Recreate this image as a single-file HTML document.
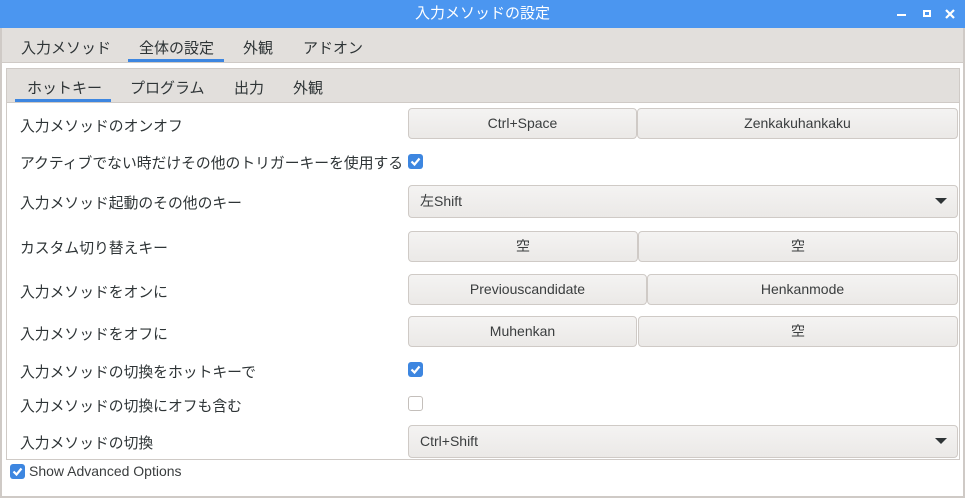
<!DOCTYPE html><html><head><meta charset="utf-8"><style>
*{box-sizing:border-box;margin:0;padding:0}
body{width:965px;height:498px;background:#fff;font-family:"Liberation Sans","Noto Sans CJK JP",sans-serif;font-size:14px;color:#2e3436;position:relative;overflow:hidden}
.abs{position:absolute}
.title{left:0;top:0;width:965px;height:28px;background:#4b96f0;color:#fff;text-align:center;line-height:28px;font-size:15px}
.win{left:0;top:28px;width:965px;height:470px;border-left:2px solid #cfcac6;border-right:2px solid #cfcac6;border-bottom:2px solid #cfcac6}
.tb1{left:2px;top:28px;width:961px;height:35px;background:#e2dfdc;border-bottom:1px solid #cfcac6}
.tab{position:absolute;font-size:15px}
.ul{position:absolute;height:3px;background:#3d86e0}
.frame{left:6px;top:68px;width:954px;height:392px;border:1px solid #cfcac6}
.tb2{left:7px;top:69px;width:952px;height:34px;background:#e2dfdc;border-bottom:1px solid #cfcac6}
.lbl{position:absolute;left:20px;font-size:14.8px}
.btn{position:absolute;height:31px;border:1px solid #cfcac6;border-radius:4px;background:linear-gradient(#f4f3f2,#ebe9e7);text-align:center;line-height:29px;font-size:14px;color:#3a3d3e}
.dd{text-align:left;padding-left:11px}
.arr{position:absolute;right:10px;top:12px;width:0;height:0;border-left:6px solid transparent;border-right:6px solid transparent;border-top:6px solid #2e3436}
.cb{position:absolute;width:15px;height:15px;border-radius:3px;background:#3d86e0}
.cb svg{position:absolute;left:0;top:0}
.cbe{position:absolute;width:15px;height:15px;border-radius:3px;border:1px solid #c4bfbb;background:#fff}
</style></head><body>
<div class="abs title">入力メソッドの設定</div>
<div class="abs" style="left:897px;top:14px;width:9px;height:2px;background:#fff"></div>
<div class="abs" style="left:923px;top:10px;width:8px;height:7px;border:2px solid #fff"></div>
<svg class="abs" style="left:945px;top:9px" width="10" height="10"><path d="M1 1L9 9M9 1L1 9" stroke="#fff" stroke-width="2.2"/></svg>
<div class="abs win"></div>
<div class="abs tb1"></div>
<div class="tab" style="left:21px;top:37px">入力メソッド</div>
<div class="tab" style="left:139px;top:37px">全体の設定</div>
<div class="tab" style="left:243px;top:37px">外観</div>
<div class="tab" style="left:303px;top:37px">アドオン</div>
<div class="ul" style="left:128px;top:59px;width:96px"></div>
<div class="abs frame"></div>
<div class="abs tb2"></div>
<div class="tab" style="left:27px;top:77px">ホットキー</div>
<div class="tab" style="left:130px;top:77px">プログラム</div>
<div class="tab" style="left:234px;top:77px">出力</div>
<div class="tab" style="left:293px;top:77px">外観</div>
<div class="ul" style="left:15px;top:99px;width:96px"></div>

<div class="lbl" style="top:115px">入力メソッドのオンオフ</div>
<div class="btn" style="left:408px;top:108px;width:229px">Ctrl+Space</div>
<div class="btn" style="left:637px;top:108px;width:321px">Zenkakuhankaku</div>

<div class="lbl" style="top:152px">アクティブでない時だけその他のトリガーキーを使用する</div>
<div class="cb" style="left:408px;top:154px"><svg width="15" height="15"><path d="M3.5 7.5L6.5 10.5L11.5 4.5" stroke="#fff" stroke-width="2.2" fill="none"/></svg></div>

<div class="lbl" style="top:192px">入力メソッド起動のその他のキー</div>
<div class="btn dd" style="left:408px;top:185px;width:550px;height:33px;line-height:31px">左Shift<span class="arr"></span></div>

<div class="lbl" style="top:237px">カスタム切り替えキー</div>
<div class="btn" style="left:408px;top:231px;width:230px">空</div>
<div class="btn" style="left:638px;top:231px;width:320px">空</div>

<div class="lbl" style="top:281px">入力メソッドをオンに</div>
<div class="btn" style="left:408px;top:274px;width:239px">Previouscandidate</div>
<div class="btn" style="left:647px;top:274px;width:311px">Henkanmode</div>

<div class="lbl" style="top:323px">入力メソッドをオフに</div>
<div class="btn" style="left:408px;top:316px;width:229px">Muhenkan</div>
<div class="btn" style="left:638px;top:316px;width:320px">空</div>

<div class="lbl" style="top:361px">入力メソッドの切換をホットキーで</div>
<div class="cb" style="left:408px;top:362px"><svg width="15" height="15"><path d="M3.5 7.5L6.5 10.5L11.5 4.5" stroke="#fff" stroke-width="2.2" fill="none"/></svg></div>

<div class="lbl" style="top:395px">入力メソッドの切換にオフも含む</div>
<div class="cbe" style="left:408px;top:396px"></div>

<div class="lbl" style="top:432px">入力メソッドの切換</div>
<div class="btn dd" style="left:408px;top:425px;width:550px;height:33px;line-height:31px">Ctrl+Shift<span class="arr"></span></div>

<div class="cb" style="left:10px;top:464px"><svg width="15" height="15"><path d="M3.5 7.5L6.5 10.5L11.5 4.5" stroke="#fff" stroke-width="2.2" fill="none"/></svg></div>
<div class="abs" style="left:29px;top:463px;font-size:14px;color:#3a3d3e">Show Advanced Options</div>
</body></html>
